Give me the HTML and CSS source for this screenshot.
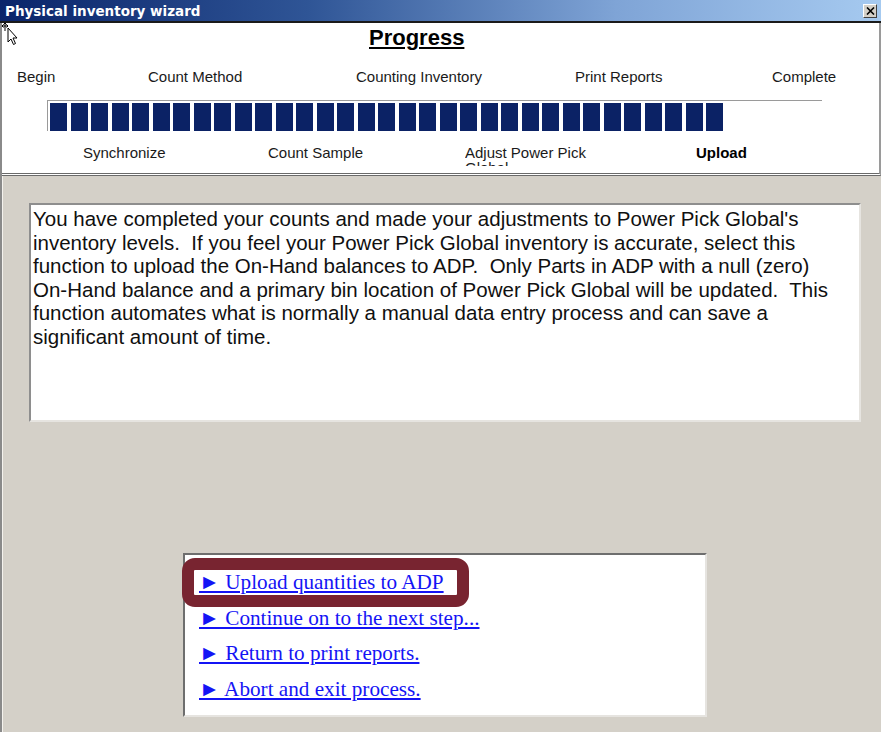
FILE: index.html
```html
<!DOCTYPE html>
<html>
<head>
<meta charset="utf-8">
<link rel="stylesheet" href="styles.css">
</head>
<body>
<div class="window">
  <div class="titlebar">
    <span class="title">Physical inventory wizard</span>
    <span class="close"><svg width="9" height="8" viewBox="0 0 9 8"><path d="M1 0.5 L8 7.5 M8 0.5 L1 7.5" stroke="#000" stroke-width="1.6"/></svg></span>
  </div>
  <div class="header">
    <svg class="cursor" width="20" height="24" viewBox="0 0 20 24">
      <path d="M4 1 L4 9 M1 4 L7 4 M4 1 L2.5 2.5 M4 1 L5.5 2.5 M1 4 L2.5 2.5 M1 4 L2.5 5.5 M7 4 L5.5 2.5 M7 4 L5.5 5.5" stroke="#000" stroke-width="1" fill="none"/>
      <path d="M7 6 L7 20 L10 17 L12.5 22.5 L14.5 21.5 L12 16 L16 16 Z" fill="#fff" stroke="#000" stroke-width="1"/>
    </svg>
    <div class="progress-title"><span>Progress</span></div>
    <div class="steps-top">
      <span>Begin</span>
      <span>Count Method</span>
      <span>Counting Inventory</span>
      <span>Print Reports</span>
      <span>Complete</span>
    </div>
    <div class="bar">
      <div class="blocks">
        <i></i><i></i><i></i><i></i><i></i><i></i><i></i><i></i><i></i><i></i><i></i>
        <i></i><i></i><i></i><i></i><i></i><i></i><i></i><i></i><i></i><i></i><i></i>
        <i></i><i></i><i></i><i></i><i></i><i></i><i></i><i></i><i></i><i></i><i></i>
      </div>
    </div>
    <div class="steps-bottom">
      <span>Synchronize</span>
      <span>Count Sample</span>
      <span class="clip">Adjust Power Pick Global</span>
      <span class="current">Upload</span>
    </div>
  </div>
  <div class="body">
    <div class="desc">You have completed your counts and made your adjustments to Power Pick Global's inventory levels.&nbsp; If you feel your Power Pick Global inventory is accurate, select this function to upload the On-Hand balances to ADP.&nbsp; Only Parts in ADP with a null (zero) On-Hand balance and a primary bin location of Power Pick Global will be updated.&nbsp; This function automates what is normally a manual data entry process and can save a significant amount of time.</div>
    <div class="links">
      <div class="highlight"></div>
      <a href="#">► Upload quantities to ADP</a>
      <a href="#">► Continue on to the next step...</a>
      <a href="#">► Return to print reports.</a>
      <a href="#">► Abort and exit process.</a>
    </div>
  </div>
</div>
</body>
</html>
```
FILE: styles.css
```css
html, body {
  margin: 0;
  padding: 0;
}
body {
  width: 881px;
  height: 732px;
  overflow: hidden;
  background: #d4d0c8;
}
.window {
  width: 881px;
  height: 732px;
  box-sizing: border-box;
  border-left: 2px solid #8a8a8a;
  display: flex;
  flex-direction: column;
  position: relative;
}
.titlebar {
  height: 21px;
  background: linear-gradient(to right, #0a246a 0%, #2f5596 35%, #7fa4d6 70%, #a6caf0 100%);
  display: flex;
  align-items: center;
  justify-content: space-between;
  padding: 0 4px 0 3px;
  border-bottom: 2px solid #1a1a1a;
  margin-left: -2px;
}
.title {
  color: #fff;
  font-family: "DejaVu Sans", sans-serif;
  font-weight: bold;
  font-size: 13.5px;
  padding-left: 2px;
}
.close {
  width: 14px;
  height: 14px;
  box-sizing: border-box;
  background: #d4d0c8;
  border-top: 1px solid #fff;
  border-left: 1px solid #fff;
  border-right: 1px solid #404040;
  border-bottom: 1px solid #404040;
  display: flex;
  align-items: center;
  justify-content: center;
}
.header {
  background: #fff;
  height: 150px;
  border-right: 2px solid #9a9a9a;
  border-bottom: 3px double #6a6a6a;
  position: relative;
  font-family: "Liberation Sans", Arial, sans-serif;
  color: #1a1a1a;
}
.cursor {
  position: absolute;
  left: -1px;
  top: -1px;
}
.progress-title {
  padding-top: 2px;
  padding-left: 367px;
  height: 26px;
  line-height: 26px;
}
.progress-title span {
  font-size: 22px;
  font-weight: bold;
  text-decoration: underline;
  text-decoration-thickness: 2px;
  text-underline-offset: 2px;
  color: #000;
}
.steps-top {
  margin-top: 18px;
  display: grid;
  grid-template-columns: 131px 208px 219px 197px auto;
  padding-left: 15px;
  font-size: 15px;
  line-height: 16px;
}
.bar {
  margin-top: 15px;
  margin-left: 45px;
  width: 775px;
  height: 31px;
  box-sizing: border-box;
  border-top: 1px solid #9a9a9a;
  border-left: 1px solid #9a9a9a;
  padding: 2px 0 0 2px;
}
.blocks {
  display: flex;
  gap: 3.5px;
  height: 28px;
}
.blocks i {
  display: block;
  width: 17px;
  height: 28px;
  background: #0b2265;
}
.steps-bottom {
  margin-top: 14px;
  display: grid;
  grid-template-columns: 185px 197px 231px auto;
  padding-left: 81px;
  font-size: 15px;
  line-height: 16px;
}
.steps-bottom .clip {
  width: 140px;
  height: 21px;
  overflow: hidden;
  line-height: 15px;
}
.steps-bottom .current {
  font-weight: bold;
  color: #000;
}
.body {
  flex: 1;
  display: flex;
  flex-direction: column;
  border-left: 1px solid #f4f2ee;
}
.desc {
  margin: 27px 0 0 26px;
  width: 832px;
  height: 219px;
  box-sizing: border-box;
  background: #fff;
  border-top: 2px solid #8e8e8e;
  border-left: 2px solid #8e8e8e;
  border-right: 2px solid #e6e4e0;
  border-bottom: 2px solid #e6e4e0;
  padding: 2px 28px 0 2px;
  font-family: "Liberation Sans", Arial, sans-serif;
  font-size: 20.5px;
  line-height: 23.6px;
  color: #101010;
}
.links {
  margin: 131px 0 0 180px;
  width: 524px;
  height: 164px;
  box-sizing: border-box;
  background: #fff;
  border-top: 2px solid #6e6e6e;
  border-left: 2px solid #6e6e6e;
  border-right: 2px solid #e6e4e0;
  border-bottom: 2px solid #e6e4e0;
  padding: 15px 0 0 14px;
  position: relative;
  display: flex;
  flex-direction: column;
  gap: 11.5px;
}
.links a {
  font-family: "Liberation Serif", "Times New Roman", serif;
  font-size: 21.2px;
  line-height: 24px;
  color: #1414f5;
  text-decoration: underline;
  text-underline-offset: 2px;
  position: relative;
  z-index: 1;
  align-self: flex-start;
}
.highlight {
  position: absolute;
  left: -3px;
  top: 3px;
  width: 287px;
  height: 49px;
  box-sizing: border-box;
  border: 12px solid #782430;
  border-radius: 13px;
  z-index: 2;
}
```
